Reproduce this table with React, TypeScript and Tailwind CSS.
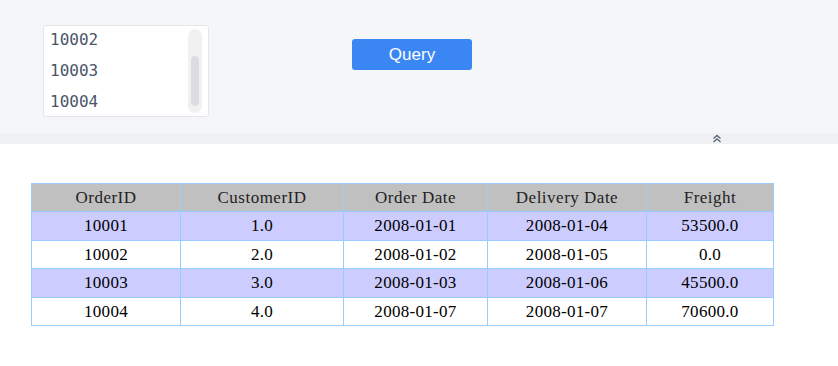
const rows = [
  ['10001', '1.0', '2008-01-01', '2008-01-04', '53500.0'],
  ['10002', '2.0', '2008-01-02', '2008-01-05', '0.0'],
  ['10003', '3.0', '2008-01-03', '2008-01-06', '45500.0'],
  ['10004', '4.0', '2008-01-07', '2008-01-07', '70600.0'],
];

const headers = ['OrderID', 'CustomerID', 'Order Date', 'Delivery Date', 'Freight'];
const widths = ['w-[149px]', 'w-[163px]', 'w-[144px]', 'w-[159px]', 'w-[127px]'];

const App = () => {
  return (
    <div className="w-[838px] h-[366px] bg-white">
      {/* Query panel */}
      <div className="h-[133px] bg-[#f5f6f8] flex items-start">
        <div className="ml-[43px] mt-[25px] w-[166px] h-[92px] bg-white border border-[#e3e5ea] rounded-[3px] relative overflow-hidden">
          <ul className="font-['DejaVu_Sans_Mono',monospace] text-[16px] text-[#4a5568]">
            {['10002', '10003', '10004'].map((v) => (
              <li key={v} className="h-[31px] leading-[28px] pl-[6px]">{v}</li>
            ))}
          </ul>
          {/* scrollbar */}
          <div className="absolute right-[6px] top-[3px] w-[14px] h-[84px] rounded-full bg-[#f1f1f2]">
            <div className="absolute left-[3px] top-[27px] w-[8px] h-[50px] rounded-full bg-[#dcdde1]" />
          </div>
        </div>
        <button className="ml-[143px] mt-[39px] w-[120px] h-[31px] rounded-[3px] bg-[#3a86f3] text-white text-[17px] font-['Liberation_Sans',Arial,sans-serif] leading-none">
          Query
        </button>
      </div>
      {/* collapse bar */}
      <div className="h-[11px] bg-[#f0f1f2] flex justify-end items-center pr-[116px]">
        <svg width="10" height="9" viewBox="0 0 10 9" fill="none" stroke="#5b6478" strokeWidth="1.4">
          <polyline points="1.5,4.5 5,1.5 8.5,4.5" />
          <polyline points="1.5,8 5,5 8.5,8" />
        </svg>
      </div>

      {/* Table */}
      <div className="pl-[31px] pt-[39px]">
        <table className="border-collapse font-['Liberation_Serif',serif] text-[17px] text-black">
          <thead>
            <tr className="bg-[#c0c0c0] h-[28px]">
              {headers.map((h, i) => (
                <th key={h} className={`${widths[i]} border border-[#99ccff] font-normal text-[#222] p-0 tracking-[0.5px]`}>{h}</th>
              ))}
            </tr>
          </thead>
          <tbody>
            {rows.map((r, ri) => (
              <tr key={r[0]} className={`h-[28.5px] ${ri % 2 === 0 ? 'bg-[#ccccff]' : 'bg-white'}`}>
                {r.map((c, ci) => (
                  <td key={ci} className="border border-[#99ccff] text-center p-0 tracking-[0.3px]">{c}</td>
                ))}
              </tr>
            ))}
          </tbody>
        </table>
      </div>
    </div>
  );
};

export default App;
